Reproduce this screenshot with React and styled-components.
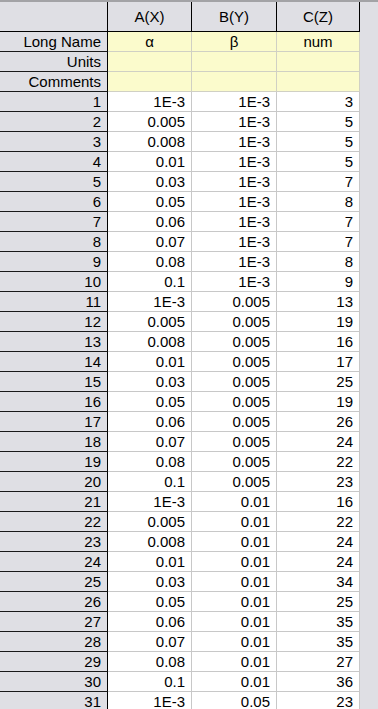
import React from 'react';
import styled, { createGlobalStyle } from 'styled-components';

const GlobalStyle = createGlobalStyle`
  html, body {
    margin: 0;
    padding: 0;
    background: #dfdfe4;
    overflow: hidden;
  }
  body {
    font-family: "Liberation Sans", Arial, sans-serif;
    font-size: 15px;
    color: #000;
  }
`;

const rows = [
  ['1E-3', '1E-3', 3], ['0.005', '1E-3', 5], ['0.008', '1E-3', 5], ['0.01', '1E-3', 5],
  ['0.03', '1E-3', 7], ['0.05', '1E-3', 8], ['0.06', '1E-3', 7], ['0.07', '1E-3', 7],
  ['0.08', '1E-3', 8], ['0.1', '1E-3', 9], ['1E-3', '0.005', 13], ['0.005', '0.005', 19],
  ['0.008', '0.005', 16], ['0.01', '0.005', 17], ['0.03', '0.005', 25], ['0.05', '0.005', 19],
  ['0.06', '0.005', 26], ['0.07', '0.005', 24], ['0.08', '0.005', 22], ['0.1', '0.005', 23],
  ['1E-3', '0.01', 16], ['0.005', '0.01', 22], ['0.008', '0.01', 24], ['0.01', '0.01', 24],
  ['0.03', '0.01', 34], ['0.05', '0.01', 25], ['0.06', '0.01', 35], ['0.07', '0.01', 35],
  ['0.08', '0.01', 27], ['0.1', '0.01', 36], ['1E-3', '0.05', 23],
];

const labels = [
  { name: 'Long Name', vals: ['α', 'β', 'num'] },
  { name: 'Units', vals: ['', '', ''] },
  { name: 'Comments', vals: ['', '', ''] },
];

const HEAD_BG = '#dfdfe4';
const YELLOW = '#fbfbcc';

const Sheet = styled.div`
  height: 709px;
  overflow: hidden;
  border-top: 2px solid #a3a3a6;
  box-sizing: border-box;
`;

const Grid = styled.div`
  display: grid;
  grid-template-columns: 108px 84px 85px 83px;
  grid-template-rows: 30px;
  grid-auto-rows: 20px;
  width: 360px;
`;

const Row = styled.div`
  display: contents;
`;

const Cell = styled.div`
  box-sizing: border-box;
  display: flex;
  align-items: center;
  justify-content: ${p => (p.$center ? 'center' : 'flex-end')};
  padding: 0 6px 0 ${p => (p.$center ? '6px' : '0')};
  background: ${p => p.$bg || '#ffffff'};
  border-right: 1px solid ${p => p.$line || '#c8c8c8'};
  border-bottom: 1px solid ${p => p.$line || '#c8c8c8'};
  white-space: nowrap;
  line-height: 1;
`;

const ColHead = styled(Cell)`
  justify-content: center;
  padding: 0;
  background: ${HEAD_BG};
  border-color: #000;
`;

const RowHead = styled(Cell)`
  background: ${HEAD_BG};
  border-right-color: #000;
  border-bottom-color: #1a1a1a;
`;

export default function App() {
  return (
    <>
      <GlobalStyle />
      <Sheet>
        <Grid>
          <Row>
            <ColHead />
            {['A(X)', 'B(Y)', 'C(Z)'].map(h => (
              <ColHead key={h}>{h}</ColHead>
            ))}
          </Row>
          {labels.map(l => (
            <Row key={l.name}>
              <RowHead>{l.name}</RowHead>
              {l.vals.map((v, i) => (
                <Cell key={i} $center $bg={YELLOW} $line="#d0d0c4">
                  {v}
                </Cell>
              ))}
            </Row>
          ))}
          {rows.map((r, i) => (
            <Row key={i}>
              <RowHead>{i + 1}</RowHead>
              {r.map((v, j) => (
                <Cell key={j}>{v}</Cell>
              ))}
            </Row>
          ))}
        </Grid>
      </Sheet>
    </>
  );
}
